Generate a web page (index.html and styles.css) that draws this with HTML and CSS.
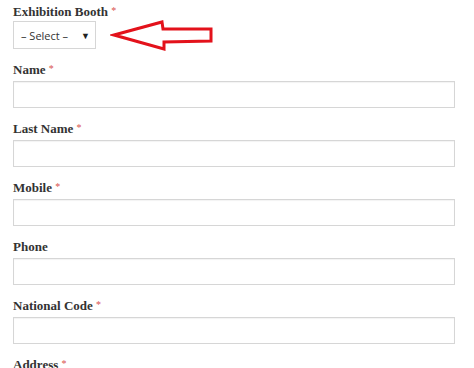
FILE: index.html
```html
<!DOCTYPE html>
<html>
<head>
<meta charset="utf-8">
<link rel="stylesheet" href="styles.css">
</head>
<body>
<form class="form">
  <div class="field field-first">
    <label class="label">Exhibition Booth <span class="req">*</span></label>
    <div class="select-row">
      <div class="select"><span class="select-text">– Select –</span><span class="select-arrow">▼</span></div>
      <svg class="pointer" width="104" height="32" viewBox="0 0 104 32">
        <polygon points="4,16 52,3 53,10 101,10 101,22 54,23 54,30" fill="#fff" stroke="#e3121b" stroke-width="3" stroke-linejoin="miter"/>
      </svg>
    </div>
  </div>
  <div class="field">
    <label class="label">Name <span class="req">*</span></label>
    <div class="input"></div>
  </div>
  <div class="field">
    <label class="label">Last Name <span class="req">*</span></label>
    <div class="input"></div>
  </div>
  <div class="field">
    <label class="label">Mobile <span class="req">*</span></label>
    <div class="input"></div>
  </div>
  <div class="field">
    <label class="label">Phone</label>
    <div class="input"></div>
  </div>
  <div class="field">
    <label class="label">National Code <span class="req">*</span></label>
    <div class="input"></div>
  </div>
  <div class="field">
    <label class="label">Address <span class="req">*</span></label>
    <div class="input"></div>
  </div>
</form>
</body>
</html>
```
FILE: styles.css
```css
html, body {
  margin: 0;
  background: #fff;
}
body {
  padding: 3px 19px 0 13px;
  font-family: "Liberation Serif", serif;
  color: #333;
  overflow: hidden;
}
.form {
  display: flex;
  flex-direction: column;
}
.field {
  display: flex;
  flex-direction: column;
  margin-bottom: 12px;
}
.label {
  display: block;
  height: 18px;
  font-weight: bold;
  font-size: 13px;
  line-height: 18px;
  color: #333;
  margin-bottom: 2px;
  white-space: nowrap;
}
.field-first .label {
  margin-bottom: 0;
}
.req {
  color: #d9534f;
  font-size: 10px;
  line-height: 1;
  font-weight: normal;
  vertical-align: 2px;
}
.input {
  height: 27px;
  box-sizing: border-box;
  border: 1px solid #d6d6d6;
  box-shadow: inset 0 1px 1px rgba(0,0,0,0.05);
  background: #fff;
}
.select-row {
  display: flex;
  align-items: center;
  height: 28px;
}
.select {
  width: 83px;
  height: 28px;
  box-sizing: border-box;
  border: 1px solid #d6d6d6;
  display: flex;
  align-items: center;
  padding-left: 7px;
  font-family: "Open Sans", "Liberation Sans", sans-serif;
  font-size: 11px;
  color: #333;
}
.select-text {
  flex: 1;
}
.select-arrow {
  font-size: 9px;
  margin-right: 5px;
  color: #222;
}
.pointer {
  display: block;
  margin: -2px 0 -2px 14px;
}
```
